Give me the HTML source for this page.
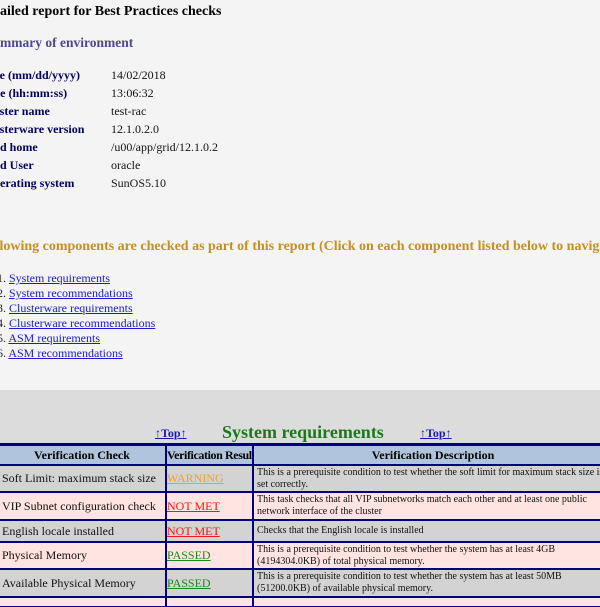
<!DOCTYPE html>
<html><head><style>
body{margin:0;width:600px;height:599px;overflow:hidden;background:#f4f4f4;font-family:"Liberation Serif",serif;position:relative}
.a{position:absolute;white-space:nowrap}
.lb{font-weight:bold;color:#000060;font-size:12px}
.v{font-size:12px;color:#111}
.li{font-size:12px;color:#222}
.li a{color:#1a1ad0;text-decoration:underline}
.c{position:absolute;border:1px solid #000080;box-sizing:border-box;overflow:hidden;white-space:nowrap}
.h{background:#b0c4de;font-weight:bold;font-size:12px;text-align:center;line-height:18px;color:#000}
.g{background:#d3d3d3}.p{background:#ffe4e1}
.t{font-size:12px;color:#111;padding-left:0}
.d{font-size:10px;color:#111;line-height:12px;padding:1px 0 0 3px;white-space:normal;width:360px}
.r{font-size:12px;text-decoration:underline;padding-left:0}
</style></head><body>
<div class="a" style="left:-21px;top:4px;font-size:14px;font-weight:bold;color:#000">Detailed report for Best Practices checks</div>
<div class="a" style="left:-15px;top:35px;font-size:13.5px;font-weight:bold;color:#4a4a8c">Summary of environment</div>
<div class="a lb" style="left:-19px;top:68px">Date (mm/dd/yyyy)</div><div class="a v" style="left:111px;top:68px">14/02/2018</div>
<div class="a lb" style="left:-21px;top:86px">Time (hh:mm:ss)</div><div class="a v" style="left:111px;top:86px">13:06:32</div>
<div class="a lb" style="left:-19px;top:104px">Cluster name</div><div class="a v" style="left:111px;top:104px">test-rac</div>
<div class="a lb" style="left:-19px;top:122px">Clusterware version</div><div class="a v" style="left:111px;top:122px">12.1.0.2.0</div>
<div class="a lb" style="left:-18px;top:140px">Grid home</div><div class="a v" style="left:111px;top:140px">/u00/app/grid/12.1.0.2</div>
<div class="a lb" style="left:-18px;top:158px">Grid User</div><div class="a v" style="left:111px;top:158px">oracle</div>
<div class="a lb" style="left:-16px;top:176px">Operating system</div><div class="a v" style="left:111px;top:176px">SunOS5.10</div>
<div class="a" style="left:-20px;top:239px;font-size:14px;font-weight:bold;color:#c4901e">Following components are checked as part of this report (Click on each component listed below to navigate)</div>
<div class="a li" style="left:-3px;top:271px">1. <a>System requirements</a></div>
<div class="a li" style="left:-3px;top:286px">2. <a>System recommendations</a></div>
<div class="a li" style="left:-3px;top:301px">3. <a>Clusterware requirements</a></div>
<div class="a li" style="left:-3px;top:316px">4. <a>Clusterware recommendations</a></div>
<div class="a li" style="left:-3px;top:331px">5. <a>ASM requirements</a></div>
<div class="a li" style="left:-3px;top:346px">6. <a>ASM recommendations</a></div>
<div style="position:absolute;left:0;top:390px;width:600px;height:209px;background:#dcdcdc"></div>
<div class="a" style="left:155px;top:426px;font-size:12px;font-weight:bold;color:#1a1ab0;text-decoration:underline">↑Top↑</div>
<div class="a" style="left:222px;top:422px;font-size:18px;font-weight:bold;color:#1a7a1a">System requirements</div>
<div class="a" style="left:420px;top:426px;font-size:12px;font-weight:bold;color:#1a1ab0;text-decoration:underline">↑Top↑</div>
<div style="position:absolute;left:0;top:443px;width:600px;height:2px;background:#000080"></div>
<div class="c h" style="left:-2px;top:445px;width:168px;height:20px">Verification Check</div>
<div class="c h" style="left:166px;top:445px;width:87px;height:20px;letter-spacing:-0.4px;text-align:left">Verification Result</div>
<div class="c h" style="left:253px;top:445px;width:360px;height:20px">Verification Description</div>

<div class="c g t" style="left:-2px;top:465px;width:168px;height:27px;line-height:25px">&nbsp;Soft Limit: maximum stack size</div>
<div class="c g r" style="left:166px;top:465px;width:87px;height:27px;line-height:25px;color:#f0a030">WARNING</div>
<div class="c g d" style="left:253px;top:465px;height:27px">This is a prerequisite condition to test whether the soft limit for maximum stack size is set correctly.</div>

<div class="c p t" style="left:-2px;top:492px;width:168px;height:28px;line-height:26px">&nbsp;VIP Subnet configuration check</div>
<div class="c p r" style="left:166px;top:492px;width:87px;height:28px;line-height:26px;color:#f01818">NOT MET</div>
<div class="c p d" style="left:253px;top:492px;height:28px">This task checks that all VIP subnetworks match each other and at least one public network interface of the cluster</div>

<div class="c g t" style="left:-2px;top:520px;width:168px;height:22px;line-height:20px">&nbsp;English locale installed</div>
<div class="c g r" style="left:166px;top:520px;width:87px;height:22px;line-height:20px;color:#f01818">NOT MET</div>
<div class="c g d" style="left:253px;top:520px;height:22px;line-height:18px">Checks that the English locale is installed</div>

<div class="c p t" style="left:-2px;top:542px;width:168px;height:27px;line-height:25px">&nbsp;Physical Memory</div>
<div class="c p r" style="left:166px;top:542px;width:87px;height:27px;line-height:25px;color:#1a8a1a">PASSED</div>
<div class="c p d" style="left:253px;top:542px;height:27px">This is a prerequisite condition to test whether the system has at least 4GB (4194304.0KB) of total physical memory.</div>

<div class="c g t" style="left:-2px;top:569px;width:168px;height:28px;line-height:26px">&nbsp;Available Physical Memory</div>
<div class="c g r" style="left:166px;top:569px;width:87px;height:28px;line-height:26px;color:#1a8a1a">PASSED</div>
<div class="c g d" style="left:253px;top:569px;height:28px">This is a prerequisite condition to test whether the system has at least 50MB (51200.0KB) of available physical memory.</div>
<div class="c p" style="left:-2px;top:597px;width:168px;height:10px"></div>
<div class="c p" style="left:166px;top:597px;width:87px;height:10px"></div>
<div class="c p" style="left:253px;top:597px;width:360px;height:10px"></div>
</body></html>
